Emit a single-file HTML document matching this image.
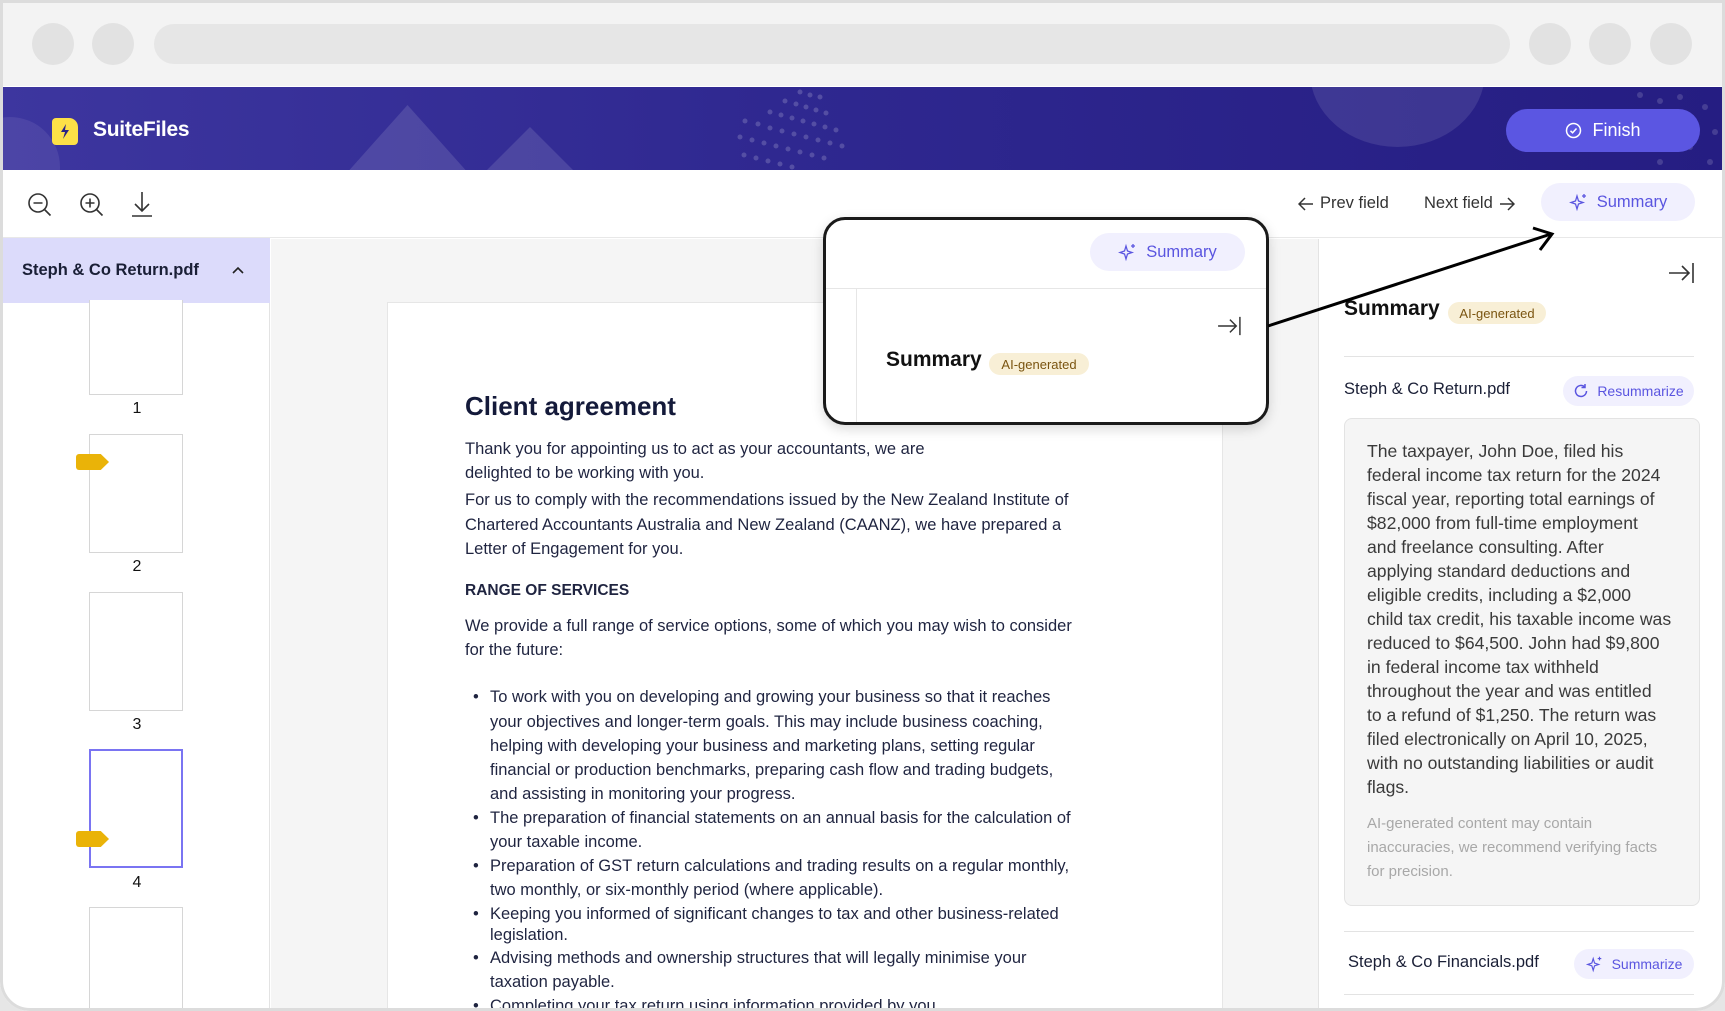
<!DOCTYPE html>
<html><head><meta charset="utf-8">
<style>
*{margin:0;padding:0;box-sizing:border-box}
body{width:1725px;height:1011px;overflow:hidden;background:#e6e6e6;font-family:"Liberation Sans",sans-serif;color:#1a1f36;position:relative}
.a{position:absolute}
.frame{position:absolute;left:0;top:0;width:1725px;height:1011px;border-radius:0 0 30px 30px;overflow:hidden;background:#fff}
.border{position:absolute;left:0;top:0;width:1725px;height:1011px;border:3px solid #dcdcdc;border-radius:0 0 30px 30px;pointer-events:none}
.circ{position:absolute;width:42px;height:42px;border-radius:50%;background:#e2e2e2;top:23px}
.line{position:absolute;white-space:nowrap;font-size:16.5px;line-height:24px;color:#1f2440}
.s{position:absolute;white-space:nowrap;font-size:17.6px;line-height:24px;color:#3a3a3a;left:1367px}
.d{position:absolute;white-space:nowrap;font-size:15px;line-height:24px;color:#a8a8a8;left:1367px}
.thumb{position:absolute;left:89px;width:94px;background:#fff;border:1.5px solid #d6d6d6}
.num{position:absolute;left:126px;width:24px;text-align:center;font-size:16px;color:#111}
.tag{position:absolute;left:76px;width:33px;height:16px;background:#eab308;clip-path:polygon(0 0,75% 0,100% 50%,75% 100%,0 100%);border-radius:3px}
.pill{position:absolute;background:#f1f0fe;border-radius:20px;color:#5a55e0;display:flex;align-items:center;justify-content:center;gap:8px;white-space:nowrap}
.badge{position:absolute;background:#f8efd6;color:#7a5410;border-radius:12px;font-size:13px;display:flex;align-items:center;justify-content:center}
</style></head><body>
<div class="frame">
<div class="a" style="left:0;top:0;width:1725px;height:86px;background:#f3f3f3"></div>
<div class="circ" style="left:32px"></div><div class="circ" style="left:92px"></div>
<div class="a" style="left:154px;top:24px;width:1356px;height:40px;border-radius:20px;background:#e6e6e6"></div>
<div class="circ" style="left:1529px"></div><div class="circ" style="left:1589px"></div><div class="circ" style="left:1650px"></div>
<div class="a" style="left:0;top:87px;width:1725px;height:83px;background:linear-gradient(90deg,#3d369f 0%,#2f2890 45%,#251d82 100%);overflow:hidden">
 <div class="a" style="left:-40px;top:30px;width:100px;height:100px;border-radius:50%;background:rgba(255,255,255,.08)"></div>
 <div class="a" style="left:345px;top:18px;width:125px;height:70px;background:rgba(255,255,255,.12);clip-path:polygon(50% 0,100% 100%,0 100%)"></div>
 <div class="a" style="left:480px;top:40px;width:100px;height:50px;background:rgba(255,255,255,.12);clip-path:polygon(50% 0,100% 100%,0 100%)"></div>
 <div class="a" style="left:1310px;top:-90px;width:175px;height:150px;border-radius:50%;background:rgba(255,255,255,.1)"></div>
 <svg class="a" style="left:730px;top:0" width="150" height="83"><g fill="rgba(255,255,255,.18)">
 <circle cx="70" cy="5" r="2.5"/><circle cx="80" cy="8" r="2.5"/><circle cx="90" cy="10" r="2.5"/>
 <circle cx="55" cy="14" r="2.5"/><circle cx="66" cy="17" r="2.5"/><circle cx="76" cy="20" r="2.5"/><circle cx="86" cy="23" r="2.5"/><circle cx="96" cy="26" r="2.5"/>
 <circle cx="40" cy="25" r="2.5"/><circle cx="51" cy="28" r="2.5"/><circle cx="62" cy="31" r="2.5"/><circle cx="73" cy="34" r="2.5"/><circle cx="84" cy="37" r="2.5"/><circle cx="95" cy="40" r="2.5"/><circle cx="106" cy="43" r="2.5"/>
 <circle cx="15" cy="34" r="2.5"/><circle cx="28" cy="37" r="2.5"/><circle cx="40" cy="41" r="2.5"/><circle cx="52" cy="44" r="2.5"/><circle cx="64" cy="47" r="2.5"/><circle cx="76" cy="50" r="2.5"/><circle cx="88" cy="53" r="2.5"/><circle cx="100" cy="56" r="2.5"/><circle cx="112" cy="59" r="2.5"/>
 <circle cx="10" cy="50" r="2.5"/><circle cx="22" cy="53" r="2.5"/><circle cx="34" cy="56" r="2.5"/><circle cx="46" cy="59" r="2.5"/><circle cx="58" cy="62" r="2.5"/><circle cx="70" cy="65" r="2.5"/><circle cx="82" cy="68" r="2.5"/><circle cx="94" cy="71" r="2.5"/>
 <circle cx="14" cy="68" r="2.5"/><circle cx="26" cy="71" r="2.5"/><circle cx="38" cy="74" r="2.5"/><circle cx="50" cy="77" r="2.5"/><circle cx="62" cy="80" r="2.5"/>
 </g></svg>
 <svg class="a" style="left:1620px;top:0" width="105" height="83"><g fill="rgba(255,255,255,.15)">
 <circle cx="20" cy="8" r="3"/><circle cx="40" cy="14" r="3"/><circle cx="60" cy="10" r="3"/><circle cx="85" cy="20" r="3"/><circle cx="30" cy="30" r="3"/><circle cx="95" cy="45" r="3"/><circle cx="70" cy="60" r="3"/><circle cx="90" cy="75" r="3"/><circle cx="40" cy="75" r="3"/></g></svg>
 <div class="a" style="left:52px;top:31px;width:26px;height:27px;background:#fde047;border-radius:4px 9px 4px 4px"></div>
 <svg class="a" style="left:58px;top:36px" width="14" height="17"><path d="M8 1 L3 9 H7 L5 16 L11 7 H7 Z" fill="#2a2285"/></svg>
 <div class="a" style="left:93px;top:31px;font-size:21px;font-weight:bold;color:#fff;letter-spacing:-.3px">SuiteFiles</div>
 <div class="a" style="left:1506px;top:22px;width:194px;height:43px;border-radius:22px;background:#5b56e2;color:#fff;font-size:18px;display:flex;align-items:center;justify-content:center;gap:10px">
  <svg width="17" height="17" viewBox="0 0 17 17"><circle cx="8.5" cy="8.5" r="7" fill="none" stroke="#fff" stroke-width="1.5"/><path d="M5.5 8.8 L7.6 10.8 L11.5 6.5" fill="none" stroke="#fff" stroke-width="1.5"/></svg>Finish</div>
</div>
<div class="a" style="left:0;top:170px;width:1725px;height:68px;background:#fff;border-bottom:1px solid #e8e8e8"></div>
<svg class="a" style="left:26px;top:191px" width="28" height="28" viewBox="0 0 28 28" fill="none" stroke="#333" stroke-width="1.6"><circle cx="12" cy="12" r="9"/><path d="M7.5 12h9M18.5 18.5l6 6"/></svg>
<svg class="a" style="left:78px;top:191px" width="28" height="28" viewBox="0 0 28 28" fill="none" stroke="#333" stroke-width="1.6"><circle cx="12" cy="12" r="9"/><path d="M7.5 12h9M12 7.5v9M18.5 18.5l6 6"/></svg>
<svg class="a" style="left:130px;top:190px" width="24" height="28" viewBox="0 0 24 28" fill="none" stroke="#333" stroke-width="1.6"><path d="M12 2v19M5 14l7 7 7-7M2 26h20"/></svg>
<div class="a" style="left:1298px;top:194px;font-size:16.5px;color:#333;white-space:nowrap;display:flex;align-items:center;gap:6px"><svg width="16" height="14" viewBox="0 0 16 14" fill="none" stroke="#333" stroke-width="1.5"><path d="M15 7H2M7 1L1 7l6 6"/></svg>Prev field</div>
<div class="a" style="left:1424px;top:194px;font-size:16.5px;color:#333;white-space:nowrap;display:flex;align-items:center;gap:6px">Next field<svg width="16" height="14" viewBox="0 0 16 14" fill="none" stroke="#333" stroke-width="1.5"><path d="M1 7h13M9 1l6 6-6 6"/></svg></div>
<div class="pill" style="left:1541px;top:183px;width:154px;height:38px;font-size:16.5px">
 <svg width="20" height="20" viewBox="0 0 20 20" fill="none" stroke="#5a55e0" stroke-width="1.3"><path d="M8 4 L9.5 9 L14 10.5 L9.5 12 L8 17 L6.5 12 L2 10.5 L6.5 9 Z"/><path d="M15 2v4M13 4h4"/></svg>Summary</div>
<div class="a" style="left:0;top:238px;width:270px;height:780px;background:#fff;border-right:1px solid #e3e3e3"></div>
<div class="a" style="left:0;top:238px;width:270px;height:65px;background:#dcdbfb"></div>
<div class="a" style="left:22px;top:261px;font-size:16.5px;font-weight:bold;white-space:nowrap">Steph &amp; Co Return.pdf</div>
<svg class="a" style="left:231px;top:265px" width="14" height="10"><path d="M2 8 L7 3 L12 8" fill="none" stroke="#222" stroke-width="1.6"/></svg>
<div class="thumb" style="top:300px;height:95px;border-top:none"></div><div class="num" style="top:400px;left:125px">1</div>
<div class="thumb" style="top:434px;height:119px"></div><div class="num" style="top:558px;left:125px">2</div>
<div class="thumb" style="top:592px;height:119px"></div><div class="num" style="top:716px;left:125px">3</div>
<div class="thumb" style="top:749px;height:119px;border:2px solid #7a74f2"></div><div class="num" style="top:874px;left:125px">4</div>
<div class="thumb" style="top:907px;height:110px"></div>
<div class="tag" style="top:454px"></div><div class="tag" style="top:831px"></div>
<div class="a" style="left:271px;top:239px;width:1047px;height:780px;background:#f5f5f5"></div>
<div class="a" style="left:387px;top:302px;width:836px;height:720px;background:#fff;border:1px solid #e6e6e6"></div>
<div class="a" style="left:465px;top:391px;font-size:26px;font-weight:bold;color:#141a3a;white-space:nowrap">Client agreement</div>
<div class="line" style="left:465px;top:437px">Thank you for appointing us to act as your accountants, we are</div>
<div class="line" style="left:465px;top:461px">delighted to be working with you.</div>
<div class="line" style="left:465px;top:488px">For us to comply with the recommendations issued by the New Zealand Institute of</div>
<div class="line" style="left:465px;top:513px">Chartered Accountants Australia and New Zealand (CAANZ), we have prepared a</div>
<div class="line" style="left:465px;top:537px">Letter of Engagement for you.</div>
<div class="line" style="left:465px;top:579px;font-weight:bold;font-size:15.5px">RANGE OF SERVICES</div>
<div class="line" style="left:465px;top:614px">We provide a full range of service options, some of which you may wish to consider</div>
<div class="line" style="left:465px;top:638px">for the future:</div>
<div class="line" style="left:473px;top:685px">•</div><div class="line" style="left:490px;top:685px">To work with you on developing and growing your business so that it reaches</div>
<div class="line" style="left:490px;top:710px">your objectives and longer-term goals. This may include business coaching,</div>
<div class="line" style="left:490px;top:734px">helping with developing your business and marketing plans, setting regular</div>
<div class="line" style="left:490px;top:758px">financial or production benchmarks, preparing cash flow and trading budgets,</div>
<div class="line" style="left:490px;top:782px">and assisting in monitoring your progress.</div>
<div class="line" style="left:473px;top:806px">•</div><div class="line" style="left:490px;top:806px">The preparation of financial statements on an annual basis for the calculation of</div>
<div class="line" style="left:490px;top:830px">your taxable income.</div>
<div class="line" style="left:473px;top:854px">•</div><div class="line" style="left:490px;top:854px">Preparation of GST return calculations and trading results on a regular monthly,</div>
<div class="line" style="left:490px;top:878px">two monthly, or six-monthly period (where applicable).</div>
<div class="line" style="left:473px;top:902px">•</div><div class="line" style="left:490px;top:902px">Keeping you informed of significant changes to tax and other business-related</div>
<div class="line" style="left:490px;top:923px">legislation.</div>
<div class="line" style="left:473px;top:946px">•</div><div class="line" style="left:490px;top:946px">Advising methods and ownership structures that will legally minimise your</div>
<div class="line" style="left:490px;top:970px">taxation payable.</div>
<div class="line" style="left:473px;top:994px">•</div><div class="line" style="left:490px;top:994px">Completing your tax return using information provided by you.</div>
<div class="a" style="left:1318px;top:239px;width:410px;height:780px;background:#fff;border-left:1px solid #e3e3e3"></div>
<svg class="a" style="left:1667px;top:262px" width="28" height="22" viewBox="0 0 28 22" fill="none" stroke="#333" stroke-width="1.6"><path d="M2 11h20M15 4l7 7-7 7M26 1v20"/></svg>
<div class="a" style="left:1344px;top:297px;font-size:21px;font-weight:bold;color:#111">Summary</div>
<div class="badge" style="left:1448px;top:302px;width:98px;height:22px">AI-generated</div>
<div class="a" style="left:1344px;top:356px;width:350px;height:1px;background:#e3e3e3"></div>
<div class="a" style="left:1344px;top:380px;font-size:16.5px;white-space:nowrap">Steph &amp; Co Return.pdf</div>
<div class="pill" style="left:1563px;top:376px;width:131px;height:30px;font-size:14px">
 <svg width="16" height="16" viewBox="0 0 16 16" fill="none" stroke="#5a55e0" stroke-width="1.5"><path d="M13.5 8a5.5 5.5 0 1 1-2-4.3M12 1v3.5H8.5"/></svg>Resummarize</div>
<div class="a" style="left:1344px;top:418px;width:356px;height:488px;background:#f5f5f5;border:1px solid #e3e3e3;border-radius:8px"></div>
<div class="s" style="top:439px">The taxpayer, John Doe, filed his</div>
<div class="s" style="top:463px">federal income tax return for the 2024</div>
<div class="s" style="top:487px">fiscal year, reporting total earnings of</div>
<div class="s" style="top:511px">$82,000 from full-time employment</div>
<div class="s" style="top:535px">and freelance consulting. After</div>
<div class="s" style="top:559px">applying standard deductions and</div>
<div class="s" style="top:583px">eligible credits, including a $2,000</div>
<div class="s" style="top:607px">child tax credit, his taxable income was</div>
<div class="s" style="top:631px">reduced to $64,500. John had $9,800</div>
<div class="s" style="top:655px">in federal income tax withheld</div>
<div class="s" style="top:679px">throughout the year and was entitled</div>
<div class="s" style="top:703px">to a refund of $1,250. The return was</div>
<div class="s" style="top:727px">filed electronically on April 10, 2025,</div>
<div class="s" style="top:751px">with no outstanding liabilities or audit</div>
<div class="s" style="top:775px">flags.</div>
<div class="d" style="top:812px">AI-generated content may contain</div>
<div class="d" style="top:836px">inaccuracies, we recommend verifying facts</div>
<div class="d" style="top:860px">for precision.</div>
<div class="a" style="left:1344px;top:931px;width:350px;height:1px;background:#e3e3e3"></div>
<div class="a" style="left:1348px;top:953px;font-size:16.5px;white-space:nowrap">Steph &amp; Co Financials.pdf</div>
<div class="pill" style="left:1574px;top:949px;width:120px;height:30px;font-size:14px">
 <svg width="18" height="18" viewBox="0 0 20 20" fill="none" stroke="#5a55e0" stroke-width="1.3"><path d="M8 4 L9.5 9 L14 10.5 L9.5 12 L8 17 L6.5 12 L2 10.5 L6.5 9 Z"/><path d="M15 2v4M13 4h4"/></svg>Summarize</div>
<div class="a" style="left:1344px;top:994px;width:350px;height:1px;background:#e3e3e3"></div>
<div class="a" style="left:823px;top:217px;width:446px;height:208px;background:#fff;border:3px solid #1a1a1a;border-radius:22px;overflow:hidden;box-shadow:0 4px 12px rgba(0,0,0,.15)">
 <div class="a" style="left:0;top:68px;width:446px;height:1px;background:#e6e6e6"></div>
 <div class="a" style="left:30px;top:69px;width:1px;height:140px;background:#e6e6e6"></div>
 <div class="pill" style="left:264px;top:13px;width:155px;height:38px;font-size:16.5px">
  <svg width="20" height="20" viewBox="0 0 20 20" fill="none" stroke="#5a55e0" stroke-width="1.3"><path d="M8 4 L9.5 9 L14 10.5 L9.5 12 L8 17 L6.5 12 L2 10.5 L6.5 9 Z"/><path d="M15 2v4M13 4h4"/></svg>Summary</div>
 <svg class="a" style="left:390px;top:96px" width="26" height="20" viewBox="0 0 28 22" fill="none" stroke="#333" stroke-width="1.6"><path d="M2 11h20M15 4l7 7-7 7M26 1v20"/></svg>
 <div class="a" style="left:60px;top:128px;font-size:21px;font-weight:bold;color:#111">Summary</div>
 <div class="badge" style="left:163px;top:133px;width:100px;height:22px">AI-generated</div>
</div>
<svg class="a" style="left:0;top:0" width="1725" height="1011"><path d="M1268 326 L1551 234" stroke="#000" stroke-width="3"/><path d="M1533 228 L1552 234 L1540 250" fill="none" stroke="#000" stroke-width="3"/></svg>
</div>
<div class="border"></div>
</body></html>
